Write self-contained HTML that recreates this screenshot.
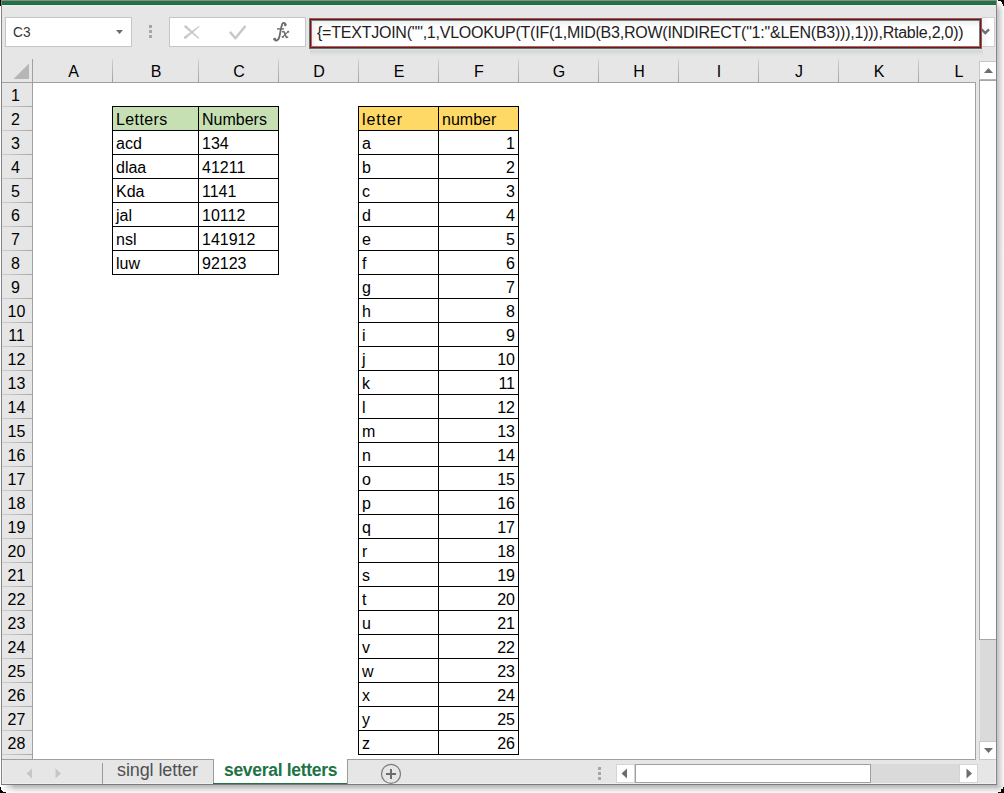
<!DOCTYPE html><html><head><meta charset="utf-8"><style>
html,body{margin:0;padding:0;}
body{width:1004px;height:793px;position:relative;overflow:hidden;background:#fff;font-family:"Liberation Sans",sans-serif;}
div{box-sizing:border-box;}
.t{position:absolute;white-space:nowrap;line-height:1;}
.c{font-size:16px;color:#000;}
.h{font-size:16px;color:#000;}
</style></head><body>
<div style="position:absolute;left:997px;top:3px;width:7px;height:782px;background:linear-gradient(to right,#c2c2c2,#cfcfcf 25%,#e2e2e2 55%,#f8f8f8);"></div>
<div style="position:absolute;left:997px;top:0px;width:7px;height:11px;background:linear-gradient(#fff,rgba(255,255,255,0));"></div>
<div style="position:absolute;left:2px;top:785px;width:995px;height:8px;background:linear-gradient(#b9b9b9,#c6c6c6 25%,#e0e0e0 55%,#fafafa);"></div>
<div style="position:absolute;left:2px;top:785px;width:13px;height:8px;background:linear-gradient(to right,#fff,rgba(255,255,255,0));"></div>
<div style="position:absolute;left:997px;top:785px;width:7px;height:8px;background:radial-gradient(circle at 0 0,#c0c0c0 0,#d4d4d4 3px,#ececec 6px,#fdfdfd 9px);"></div>
<div style="position:absolute;left:998px;top:0px;width:6px;height:1px;background:#000;"></div>
<div style="position:absolute;left:1001px;top:1px;width:3px;height:1px;background:#000;"></div>
<div style="position:absolute;left:1002px;top:2px;width:2px;height:1px;background:#000;"></div>
<div style="position:absolute;left:1002px;top:3px;width:2px;height:1px;background:#000;"></div>
<div style="position:absolute;left:1003px;top:4px;width:1px;height:1px;background:#000;"></div>
<div style="position:absolute;left:1003px;top:5px;width:1px;height:1px;background:#000;"></div>
<div style="position:absolute;left:1003px;top:787px;width:1px;height:1px;background:#000;"></div>
<div style="position:absolute;left:1003px;top:788px;width:1px;height:1px;background:#000;"></div>
<div style="position:absolute;left:1001px;top:789px;width:3px;height:1px;background:#000;"></div>
<div style="position:absolute;left:1001px;top:790px;width:3px;height:1px;background:#000;"></div>
<div style="position:absolute;left:1001px;top:791px;width:3px;height:1px;background:#000;"></div>
<div style="position:absolute;left:998px;top:792px;width:6px;height:1px;background:#000;"></div>
<div style="position:absolute;left:0px;top:787px;width:1px;height:1px;background:#000;"></div>
<div style="position:absolute;left:0px;top:788px;width:1px;height:1px;background:#000;"></div>
<div style="position:absolute;left:0px;top:789px;width:1px;height:1px;background:#000;"></div>
<div style="position:absolute;left:0px;top:790px;width:2px;height:1px;background:#000;"></div>
<div style="position:absolute;left:0px;top:791px;width:3px;height:1px;background:#000;"></div>
<div style="position:absolute;left:0px;top:792px;width:6px;height:1px;background:#000;"></div>
<div style="position:absolute;left:0px;top:0px;width:1px;height:6px;background:#000;"></div>
<div style="position:absolute;left:1px;top:0px;width:996px;height:785px;background:#e6e6e6;"></div>
<div style="position:absolute;left:2px;top:760px;width:1px;height:24px;background:#efefef;"></div>
<div style="position:absolute;left:2px;top:783px;width:994px;height:1px;background:#efefef;"></div>
<div style="position:absolute;left:995px;top:760px;width:1px;height:24px;background:#efefef;"></div>
<div style="position:absolute;left:1px;top:0px;width:996px;height:1px;background:#8e878b;"></div>
<div style="position:absolute;left:1px;top:1px;width:1px;height:784px;background:#858585;"></div>
<div style="position:absolute;left:996px;top:1px;width:1px;height:784px;background:#858585;"></div>
<div style="position:absolute;left:1px;top:784px;width:996px;height:1px;background:#7c7c7c;"></div>
<div style="position:absolute;left:2px;top:1px;width:994px;height:3px;background:#217346;"></div>
<div style="position:absolute;left:2px;top:4px;width:994px;height:1px;background:#1b6b3d;"></div>
<div style="position:absolute;left:2px;top:5px;width:994px;height:1px;background:#f2ecef;"></div>
<div style="position:absolute;left:5px;top:17px;width:127px;height:30px;background:#fff;border:1px solid #c6c6c6;"></div>
<div class="t" style="left:13px;top:24px;font-size:15.5px;color:#333;letter-spacing:0.2px;transform:scaleX(0.88);transform-origin:0 0;">C3</div>
<svg style="position:absolute;left:116px;top:30px" width="8" height="5"><path d="M0 0H7L3.5 4Z" fill="#6d6d6d"/></svg>
<div style="position:absolute;left:149px;top:25px;width:3px;height:3px;background:#a6a6a6;"></div>
<div style="position:absolute;left:149px;top:30px;width:3px;height:3px;background:#a6a6a6;"></div>
<div style="position:absolute;left:149px;top:35px;width:3px;height:3px;background:#a6a6a6;"></div>
<div style="position:absolute;left:169px;top:17px;width:137px;height:30px;background:#fff;border:1px solid #c6c6c6;"></div>
<svg style="position:absolute;left:178px;top:18px" width="30" height="28"><g fill="#c8c8c8"><polygon points="6.73,9.57 20.07,20.59 20.93,19.61 8.47,7.63"/><circle cx="7.6" cy="8.6" r="1.3"/><circle cx="20.5" cy="20.1" r="0.65"/><polygon points="8.02,20.61 21.18,9.07 20.42,8.13 6.38,18.59"/><circle cx="7.2" cy="19.6" r="1.3"/><circle cx="20.8" cy="8.6" r="0.6"/></g></svg>
<svg style="position:absolute;left:224px;top:18px" width="30" height="28"><path d="M6.6 14.6L11.4 20.2L20.8 8.8" stroke="#c8c8c8" stroke-width="2.5" stroke-linecap="round" stroke-linejoin="round" fill="none"/></svg>
<svg style="position:absolute;left:268px;top:18px" width="28" height="28"><g stroke="#6b6b6b" fill="none" stroke-linecap="round"><path d="M17.4 6.2C16.9 4.7 15.4 4.3 14.5 5.6C13.4 7.3 12.5 13.5 11.5 18.2C10.9 21 9.6 22.7 7.4 22.6" stroke-width="1.8"/><path d="M14.7 13.7C15.7 13.3 16.4 14 16.9 15.6L17.7 18.1C18.1 19.3 18.8 19.6 19.6 19.1" stroke-width="1.6"/><path d="M14.6 19.1L20.1 13.6" stroke-width="1.1"/></g><g fill="#6b6b6b"><circle cx="17.3" cy="6.9" r="1.3"/><circle cx="6.7" cy="21.2" r="1.4"/><rect x="9" y="10.2" width="7" height="1.4"/><circle cx="20.2" cy="13.7" r="1.05"/><circle cx="14.6" cy="19.1" r="1.0"/></g></svg>
<div style="position:absolute;left:310px;top:49px;width:673px;height:7px;background:linear-gradient(#e4e4e4 0,#e4e4e4 14%,#d6d6d6 14%,#d8d8d8 35%,#e0e0e0 70%,#e6e6e6);"></div>
<div style="position:absolute;left:309px;top:18px;width:673px;height:31px;background:#fff;border:1px solid #627272;"></div>
<div style="position:absolute;left:310px;top:19px;width:671px;height:29px;border:1px solid #a80000;"></div>
<div style="position:absolute;left:311px;top:20px;width:669px;height:27px;border:1px solid #6f8080;"></div>
<div style="position:absolute;left:312px;top:21px;width:667px;height:25px;background:#fff;box-shadow:inset 3px 3px 5px rgba(0,0,0,0.07);"></div>
<div class="t" style="left:317px;top:25px;font-size:16px;color:#222;letter-spacing:-0.235px;">{=TEXTJOIN("",1,VLOOKUP(T(IF(1,MID(B3,ROW(INDIRECT("1:"&amp;LEN(B3))),1))),Rtable,2,0))</div>
<div style="position:absolute;left:982px;top:17px;width:13px;height:30px;background:linear-gradient(to right,#f2f2f2,#fff 60%);border:1px solid #cfcfcf;border-left:none;"></div>
<svg style="position:absolute;left:979px;top:27px" width="12" height="9"><path d="M2.6 2.4L6.3 6.1L10 2.4" stroke="#6d6d6d" stroke-width="2.4" fill="none"/></svg>
<div style="position:absolute;left:112px;top:59px;width:1px;height:23px;background:linear-gradient(#d2d2d2,#b8b8b8 50%,#a2a2a2);"></div>
<div class="t h" style="left:34px;top:64px;width:79px;text-align:center;">A</div>
<div style="position:absolute;left:198px;top:59px;width:1px;height:23px;background:linear-gradient(#d2d2d2,#b8b8b8 50%,#a2a2a2);"></div>
<div class="t h" style="left:113px;top:64px;width:86px;text-align:center;">B</div>
<div style="position:absolute;left:278px;top:59px;width:1px;height:23px;background:linear-gradient(#d2d2d2,#b8b8b8 50%,#a2a2a2);"></div>
<div class="t h" style="left:199px;top:64px;width:80px;text-align:center;">C</div>
<div style="position:absolute;left:358px;top:59px;width:1px;height:23px;background:linear-gradient(#d2d2d2,#b8b8b8 50%,#a2a2a2);"></div>
<div class="t h" style="left:279px;top:64px;width:80px;text-align:center;">D</div>
<div style="position:absolute;left:438px;top:59px;width:1px;height:23px;background:linear-gradient(#d2d2d2,#b8b8b8 50%,#a2a2a2);"></div>
<div class="t h" style="left:359px;top:64px;width:80px;text-align:center;">E</div>
<div style="position:absolute;left:518px;top:59px;width:1px;height:23px;background:linear-gradient(#d2d2d2,#b8b8b8 50%,#a2a2a2);"></div>
<div class="t h" style="left:439px;top:64px;width:80px;text-align:center;">F</div>
<div style="position:absolute;left:598px;top:59px;width:1px;height:23px;background:linear-gradient(#d2d2d2,#b8b8b8 50%,#a2a2a2);"></div>
<div class="t h" style="left:519px;top:64px;width:80px;text-align:center;">G</div>
<div style="position:absolute;left:678px;top:59px;width:1px;height:23px;background:linear-gradient(#d2d2d2,#b8b8b8 50%,#a2a2a2);"></div>
<div class="t h" style="left:599px;top:64px;width:80px;text-align:center;">H</div>
<div style="position:absolute;left:758px;top:59px;width:1px;height:23px;background:linear-gradient(#d2d2d2,#b8b8b8 50%,#a2a2a2);"></div>
<div class="t h" style="left:679px;top:64px;width:80px;text-align:center;">I</div>
<div style="position:absolute;left:838px;top:59px;width:1px;height:23px;background:linear-gradient(#d2d2d2,#b8b8b8 50%,#a2a2a2);"></div>
<div class="t h" style="left:759px;top:64px;width:80px;text-align:center;">J</div>
<div style="position:absolute;left:918px;top:59px;width:1px;height:23px;background:linear-gradient(#d2d2d2,#b8b8b8 50%,#a2a2a2);"></div>
<div class="t h" style="left:839px;top:64px;width:80px;text-align:center;">K</div>
<div class="t h" style="left:919px;top:64px;width:80px;text-align:center;">L</div>
<div style="position:absolute;left:2px;top:82px;width:974px;height:1px;background:#a0a0a0;"></div>
<svg style="position:absolute;left:13px;top:63px" width="17" height="17"><path d="M16 0.5V16H0.5Z" fill="#b6b6b6"/></svg>
<div style="position:absolute;left:32px;top:59px;width:1px;height:701px;background:#a0a0a0;"></div>
<div style="position:absolute;left:2px;top:106px;width:30px;height:1px;background:linear-gradient(to right,#d0d0d0,#bcbcbc 50%,#a6a6a6);"></div>
<div class="t h" style="left:0.5px;top:88px;width:30px;text-align:center;">1</div>
<div style="position:absolute;left:2px;top:130px;width:30px;height:1px;background:linear-gradient(to right,#d0d0d0,#bcbcbc 50%,#a6a6a6);"></div>
<div class="t h" style="left:0.5px;top:112px;width:30px;text-align:center;">2</div>
<div style="position:absolute;left:2px;top:154px;width:30px;height:1px;background:linear-gradient(to right,#d0d0d0,#bcbcbc 50%,#a6a6a6);"></div>
<div class="t h" style="left:0.5px;top:136px;width:30px;text-align:center;">3</div>
<div style="position:absolute;left:2px;top:178px;width:30px;height:1px;background:linear-gradient(to right,#d0d0d0,#bcbcbc 50%,#a6a6a6);"></div>
<div class="t h" style="left:0.5px;top:160px;width:30px;text-align:center;">4</div>
<div style="position:absolute;left:2px;top:202px;width:30px;height:1px;background:linear-gradient(to right,#d0d0d0,#bcbcbc 50%,#a6a6a6);"></div>
<div class="t h" style="left:0.5px;top:184px;width:30px;text-align:center;">5</div>
<div style="position:absolute;left:2px;top:226px;width:30px;height:1px;background:linear-gradient(to right,#d0d0d0,#bcbcbc 50%,#a6a6a6);"></div>
<div class="t h" style="left:0.5px;top:208px;width:30px;text-align:center;">6</div>
<div style="position:absolute;left:2px;top:250px;width:30px;height:1px;background:linear-gradient(to right,#d0d0d0,#bcbcbc 50%,#a6a6a6);"></div>
<div class="t h" style="left:0.5px;top:232px;width:30px;text-align:center;">7</div>
<div style="position:absolute;left:2px;top:274px;width:30px;height:1px;background:linear-gradient(to right,#d0d0d0,#bcbcbc 50%,#a6a6a6);"></div>
<div class="t h" style="left:0.5px;top:256px;width:30px;text-align:center;">8</div>
<div style="position:absolute;left:2px;top:298px;width:30px;height:1px;background:linear-gradient(to right,#d0d0d0,#bcbcbc 50%,#a6a6a6);"></div>
<div class="t h" style="left:0.5px;top:280px;width:30px;text-align:center;">9</div>
<div style="position:absolute;left:2px;top:322px;width:30px;height:1px;background:linear-gradient(to right,#d0d0d0,#bcbcbc 50%,#a6a6a6);"></div>
<div class="t h" style="left:1.5px;top:304px;width:30px;text-align:center;">10</div>
<div style="position:absolute;left:2px;top:346px;width:30px;height:1px;background:linear-gradient(to right,#d0d0d0,#bcbcbc 50%,#a6a6a6);"></div>
<div class="t h" style="left:1.5px;top:328px;width:30px;text-align:center;">11</div>
<div style="position:absolute;left:2px;top:370px;width:30px;height:1px;background:linear-gradient(to right,#d0d0d0,#bcbcbc 50%,#a6a6a6);"></div>
<div class="t h" style="left:1.5px;top:352px;width:30px;text-align:center;">12</div>
<div style="position:absolute;left:2px;top:394px;width:30px;height:1px;background:linear-gradient(to right,#d0d0d0,#bcbcbc 50%,#a6a6a6);"></div>
<div class="t h" style="left:1.5px;top:376px;width:30px;text-align:center;">13</div>
<div style="position:absolute;left:2px;top:418px;width:30px;height:1px;background:linear-gradient(to right,#d0d0d0,#bcbcbc 50%,#a6a6a6);"></div>
<div class="t h" style="left:1.5px;top:400px;width:30px;text-align:center;">14</div>
<div style="position:absolute;left:2px;top:442px;width:30px;height:1px;background:linear-gradient(to right,#d0d0d0,#bcbcbc 50%,#a6a6a6);"></div>
<div class="t h" style="left:1.5px;top:424px;width:30px;text-align:center;">15</div>
<div style="position:absolute;left:2px;top:466px;width:30px;height:1px;background:linear-gradient(to right,#d0d0d0,#bcbcbc 50%,#a6a6a6);"></div>
<div class="t h" style="left:1.5px;top:448px;width:30px;text-align:center;">16</div>
<div style="position:absolute;left:2px;top:490px;width:30px;height:1px;background:linear-gradient(to right,#d0d0d0,#bcbcbc 50%,#a6a6a6);"></div>
<div class="t h" style="left:1.5px;top:472px;width:30px;text-align:center;">17</div>
<div style="position:absolute;left:2px;top:514px;width:30px;height:1px;background:linear-gradient(to right,#d0d0d0,#bcbcbc 50%,#a6a6a6);"></div>
<div class="t h" style="left:1.5px;top:496px;width:30px;text-align:center;">18</div>
<div style="position:absolute;left:2px;top:538px;width:30px;height:1px;background:linear-gradient(to right,#d0d0d0,#bcbcbc 50%,#a6a6a6);"></div>
<div class="t h" style="left:1.5px;top:520px;width:30px;text-align:center;">19</div>
<div style="position:absolute;left:2px;top:562px;width:30px;height:1px;background:linear-gradient(to right,#d0d0d0,#bcbcbc 50%,#a6a6a6);"></div>
<div class="t h" style="left:1.5px;top:544px;width:30px;text-align:center;">20</div>
<div style="position:absolute;left:2px;top:586px;width:30px;height:1px;background:linear-gradient(to right,#d0d0d0,#bcbcbc 50%,#a6a6a6);"></div>
<div class="t h" style="left:1.5px;top:568px;width:30px;text-align:center;">21</div>
<div style="position:absolute;left:2px;top:610px;width:30px;height:1px;background:linear-gradient(to right,#d0d0d0,#bcbcbc 50%,#a6a6a6);"></div>
<div class="t h" style="left:1.5px;top:592px;width:30px;text-align:center;">22</div>
<div style="position:absolute;left:2px;top:634px;width:30px;height:1px;background:linear-gradient(to right,#d0d0d0,#bcbcbc 50%,#a6a6a6);"></div>
<div class="t h" style="left:1.5px;top:616px;width:30px;text-align:center;">23</div>
<div style="position:absolute;left:2px;top:658px;width:30px;height:1px;background:linear-gradient(to right,#d0d0d0,#bcbcbc 50%,#a6a6a6);"></div>
<div class="t h" style="left:1.5px;top:640px;width:30px;text-align:center;">24</div>
<div style="position:absolute;left:2px;top:682px;width:30px;height:1px;background:linear-gradient(to right,#d0d0d0,#bcbcbc 50%,#a6a6a6);"></div>
<div class="t h" style="left:1.5px;top:664px;width:30px;text-align:center;">25</div>
<div style="position:absolute;left:2px;top:706px;width:30px;height:1px;background:linear-gradient(to right,#d0d0d0,#bcbcbc 50%,#a6a6a6);"></div>
<div class="t h" style="left:1.5px;top:688px;width:30px;text-align:center;">26</div>
<div style="position:absolute;left:2px;top:730px;width:30px;height:1px;background:linear-gradient(to right,#d0d0d0,#bcbcbc 50%,#a6a6a6);"></div>
<div class="t h" style="left:1.5px;top:712px;width:30px;text-align:center;">27</div>
<div style="position:absolute;left:2px;top:754px;width:30px;height:1px;background:linear-gradient(to right,#d0d0d0,#bcbcbc 50%,#a6a6a6);"></div>
<div class="t h" style="left:1.5px;top:736px;width:30px;text-align:center;">28</div>
<div style="position:absolute;left:33px;top:83px;width:942px;height:676px;background:#fff;"></div>
<div style="position:absolute;left:975px;top:83px;width:1px;height:677px;background:#a0a0a0;"></div>
<div style="position:absolute;left:2px;top:759px;width:974px;height:1px;background:#a0a0a0;"></div>
<div style="position:absolute;left:112px;top:106px;width:87px;height:25px;background:#c6e0b4;"></div>
<div style="position:absolute;left:198px;top:106px;width:81px;height:25px;background:#c6e0b4;"></div>
<div class="t" style="left:116px;top:112px;font-size:16px;letter-spacing:0.4px;">Letters</div>
<div class="t" style="left:202px;top:112px;font-size:16px;">Numbers</div>
<div class="t" style="left:116px;top:136px;font-size:16px;">acd</div>
<div class="t" style="left:202px;top:136px;font-size:16px;">134</div>
<div class="t" style="left:116px;top:160px;font-size:16px;">dlaa</div>
<div class="t" style="left:202px;top:160px;font-size:16px;">41211</div>
<div class="t" style="left:116px;top:184px;font-size:16px;">Kda</div>
<div class="t" style="left:202px;top:184px;font-size:16px;">1141</div>
<div class="t" style="left:116px;top:208px;font-size:16px;">jal</div>
<div class="t" style="left:202px;top:208px;font-size:16px;">10112</div>
<div class="t" style="left:116px;top:232px;font-size:16px;">nsl</div>
<div class="t" style="left:202px;top:232px;font-size:16px;">141912</div>
<div class="t" style="left:116px;top:256px;font-size:16px;">luw</div>
<div class="t" style="left:202px;top:256px;font-size:16px;">92123</div>
<div style="position:absolute;left:112px;top:106px;width:167px;height:1px;background:#000;"></div>
<div style="position:absolute;left:112px;top:130px;width:167px;height:1px;background:#000;"></div>
<div style="position:absolute;left:112px;top:154px;width:167px;height:1px;background:#000;"></div>
<div style="position:absolute;left:112px;top:178px;width:167px;height:1px;background:#000;"></div>
<div style="position:absolute;left:112px;top:202px;width:167px;height:1px;background:#000;"></div>
<div style="position:absolute;left:112px;top:226px;width:167px;height:1px;background:#000;"></div>
<div style="position:absolute;left:112px;top:250px;width:167px;height:1px;background:#000;"></div>
<div style="position:absolute;left:112px;top:274px;width:167px;height:1px;background:#000;"></div>
<div style="position:absolute;left:112px;top:106px;width:1px;height:169px;background:#000;"></div>
<div style="position:absolute;left:198px;top:106px;width:1px;height:169px;background:#000;"></div>
<div style="position:absolute;left:278px;top:106px;width:1px;height:169px;background:#000;"></div>
<div style="position:absolute;left:358px;top:106px;width:161px;height:25px;background:#ffd966;"></div>
<div class="t" style="left:362px;top:112px;font-size:16px;letter-spacing:0.9px;">letter</div>
<div class="t" style="left:442px;top:112px;font-size:16px;">number</div>
<div class="t" style="left:362px;top:136px;font-size:16px;">a</div>
<div class="t" style="left:438px;top:136px;width:77px;text-align:right;font-size:16px;">1</div>
<div class="t" style="left:362px;top:160px;font-size:16px;">b</div>
<div class="t" style="left:438px;top:160px;width:77px;text-align:right;font-size:16px;">2</div>
<div class="t" style="left:362px;top:184px;font-size:16px;">c</div>
<div class="t" style="left:438px;top:184px;width:77px;text-align:right;font-size:16px;">3</div>
<div class="t" style="left:362px;top:208px;font-size:16px;">d</div>
<div class="t" style="left:438px;top:208px;width:77px;text-align:right;font-size:16px;">4</div>
<div class="t" style="left:362px;top:232px;font-size:16px;">e</div>
<div class="t" style="left:438px;top:232px;width:77px;text-align:right;font-size:16px;">5</div>
<div class="t" style="left:362px;top:256px;font-size:16px;">f</div>
<div class="t" style="left:438px;top:256px;width:77px;text-align:right;font-size:16px;">6</div>
<div class="t" style="left:362px;top:280px;font-size:16px;">g</div>
<div class="t" style="left:438px;top:280px;width:77px;text-align:right;font-size:16px;">7</div>
<div class="t" style="left:362px;top:304px;font-size:16px;">h</div>
<div class="t" style="left:438px;top:304px;width:77px;text-align:right;font-size:16px;">8</div>
<div class="t" style="left:362px;top:328px;font-size:16px;">i</div>
<div class="t" style="left:438px;top:328px;width:77px;text-align:right;font-size:16px;">9</div>
<div class="t" style="left:362px;top:352px;font-size:16px;">j</div>
<div class="t" style="left:438px;top:352px;width:77px;text-align:right;font-size:16px;">10</div>
<div class="t" style="left:362px;top:376px;font-size:16px;">k</div>
<div class="t" style="left:438px;top:376px;width:77px;text-align:right;font-size:16px;">11</div>
<div class="t" style="left:362px;top:400px;font-size:16px;">l</div>
<div class="t" style="left:438px;top:400px;width:77px;text-align:right;font-size:16px;">12</div>
<div class="t" style="left:362px;top:424px;font-size:16px;">m</div>
<div class="t" style="left:438px;top:424px;width:77px;text-align:right;font-size:16px;">13</div>
<div class="t" style="left:362px;top:448px;font-size:16px;">n</div>
<div class="t" style="left:438px;top:448px;width:77px;text-align:right;font-size:16px;">14</div>
<div class="t" style="left:362px;top:472px;font-size:16px;">o</div>
<div class="t" style="left:438px;top:472px;width:77px;text-align:right;font-size:16px;">15</div>
<div class="t" style="left:362px;top:496px;font-size:16px;">p</div>
<div class="t" style="left:438px;top:496px;width:77px;text-align:right;font-size:16px;">16</div>
<div class="t" style="left:362px;top:520px;font-size:16px;">q</div>
<div class="t" style="left:438px;top:520px;width:77px;text-align:right;font-size:16px;">17</div>
<div class="t" style="left:362px;top:544px;font-size:16px;">r</div>
<div class="t" style="left:438px;top:544px;width:77px;text-align:right;font-size:16px;">18</div>
<div class="t" style="left:362px;top:568px;font-size:16px;">s</div>
<div class="t" style="left:438px;top:568px;width:77px;text-align:right;font-size:16px;">19</div>
<div class="t" style="left:362px;top:592px;font-size:16px;">t</div>
<div class="t" style="left:438px;top:592px;width:77px;text-align:right;font-size:16px;">20</div>
<div class="t" style="left:362px;top:616px;font-size:16px;">u</div>
<div class="t" style="left:438px;top:616px;width:77px;text-align:right;font-size:16px;">21</div>
<div class="t" style="left:362px;top:640px;font-size:16px;">v</div>
<div class="t" style="left:438px;top:640px;width:77px;text-align:right;font-size:16px;">22</div>
<div class="t" style="left:362px;top:664px;font-size:16px;">w</div>
<div class="t" style="left:438px;top:664px;width:77px;text-align:right;font-size:16px;">23</div>
<div class="t" style="left:362px;top:688px;font-size:16px;">x</div>
<div class="t" style="left:438px;top:688px;width:77px;text-align:right;font-size:16px;">24</div>
<div class="t" style="left:362px;top:712px;font-size:16px;">y</div>
<div class="t" style="left:438px;top:712px;width:77px;text-align:right;font-size:16px;">25</div>
<div class="t" style="left:362px;top:736px;font-size:16px;">z</div>
<div class="t" style="left:438px;top:736px;width:77px;text-align:right;font-size:16px;">26</div>
<div style="position:absolute;left:358px;top:106px;width:161px;height:1px;background:#000;"></div>
<div style="position:absolute;left:358px;top:130px;width:161px;height:1px;background:#000;"></div>
<div style="position:absolute;left:358px;top:154px;width:161px;height:1px;background:#000;"></div>
<div style="position:absolute;left:358px;top:178px;width:161px;height:1px;background:#000;"></div>
<div style="position:absolute;left:358px;top:202px;width:161px;height:1px;background:#000;"></div>
<div style="position:absolute;left:358px;top:226px;width:161px;height:1px;background:#000;"></div>
<div style="position:absolute;left:358px;top:250px;width:161px;height:1px;background:#000;"></div>
<div style="position:absolute;left:358px;top:274px;width:161px;height:1px;background:#000;"></div>
<div style="position:absolute;left:358px;top:298px;width:161px;height:1px;background:#000;"></div>
<div style="position:absolute;left:358px;top:322px;width:161px;height:1px;background:#000;"></div>
<div style="position:absolute;left:358px;top:346px;width:161px;height:1px;background:#000;"></div>
<div style="position:absolute;left:358px;top:370px;width:161px;height:1px;background:#000;"></div>
<div style="position:absolute;left:358px;top:394px;width:161px;height:1px;background:#000;"></div>
<div style="position:absolute;left:358px;top:418px;width:161px;height:1px;background:#000;"></div>
<div style="position:absolute;left:358px;top:442px;width:161px;height:1px;background:#000;"></div>
<div style="position:absolute;left:358px;top:466px;width:161px;height:1px;background:#000;"></div>
<div style="position:absolute;left:358px;top:490px;width:161px;height:1px;background:#000;"></div>
<div style="position:absolute;left:358px;top:514px;width:161px;height:1px;background:#000;"></div>
<div style="position:absolute;left:358px;top:538px;width:161px;height:1px;background:#000;"></div>
<div style="position:absolute;left:358px;top:562px;width:161px;height:1px;background:#000;"></div>
<div style="position:absolute;left:358px;top:586px;width:161px;height:1px;background:#000;"></div>
<div style="position:absolute;left:358px;top:610px;width:161px;height:1px;background:#000;"></div>
<div style="position:absolute;left:358px;top:634px;width:161px;height:1px;background:#000;"></div>
<div style="position:absolute;left:358px;top:658px;width:161px;height:1px;background:#000;"></div>
<div style="position:absolute;left:358px;top:682px;width:161px;height:1px;background:#000;"></div>
<div style="position:absolute;left:358px;top:706px;width:161px;height:1px;background:#000;"></div>
<div style="position:absolute;left:358px;top:730px;width:161px;height:1px;background:#000;"></div>
<div style="position:absolute;left:358px;top:754px;width:161px;height:1px;background:#000;"></div>
<div style="position:absolute;left:358px;top:106px;width:1px;height:649px;background:#000;"></div>
<div style="position:absolute;left:438px;top:106px;width:1px;height:649px;background:#000;"></div>
<div style="position:absolute;left:518px;top:106px;width:1px;height:649px;background:#000;"></div>
<div style="position:absolute;left:979px;top:61px;width:17px;height:19px;background:#fff;border:1px solid #c8c8c8;border-right:none;border-bottom-color:#b4b4b4;"></div>
<svg style="position:absolute;left:984px;top:68px" width="10" height="6"><path d="M0 5H9L4.5 0Z" fill="#6d6d6d"/></svg>
<div style="position:absolute;left:979px;top:80px;width:17px;height:560px;background:#fff;border:1px solid #a6a6a6;border-right:none;"></div>
<div style="position:absolute;left:980px;top:640px;width:16px;height:101px;background:#dadada;"></div>
<div style="position:absolute;left:979px;top:741px;width:17px;height:19px;background:#fff;border:1px solid #c8c8c8;border-right:none;"></div>
<svg style="position:absolute;left:984px;top:748px" width="10" height="6"><path d="M0 0H9L4.5 5Z" fill="#6d6d6d"/></svg>
<div style="position:absolute;left:102px;top:763px;width:1px;height:21px;background:#9a9a9a;"></div>
<svg style="position:absolute;left:26px;top:768px" width="7" height="11"><path d="M6 0.5V10.5L0.5 5.5Z" fill="#c6c6c6"/></svg>
<svg style="position:absolute;left:55px;top:768px" width="7" height="11"><path d="M0.5 0.5V10.5L6 5.5Z" fill="#c6c6c6"/></svg>
<div class="t" style="left:117px;top:761px;font-size:18px;color:#505050;letter-spacing:-0.1px;">singl letter</div>
<div style="position:absolute;left:213px;top:759px;width:1px;height:25px;background:#9a9a9a;"></div>
<div style="position:absolute;left:214px;top:759px;width:133px;height:25px;background:#fff;"></div>
<div style="position:absolute;left:213px;top:783px;width:135px;height:1px;background:#217346;"></div>
<div style="position:absolute;left:347px;top:759px;width:1px;height:25px;background:#9a9a9a;"></div>
<div class="t" style="left:224px;top:761.5px;font-size:17.5px;font-weight:bold;color:#217346;letter-spacing:-0.3px;">several letters</div>
<svg style="position:absolute;left:380px;top:763px" width="22" height="22"><circle cx="11" cy="10.9" r="9.5" stroke="#7a7a7a" stroke-width="1.2" fill="none"/><path d="M11 6V16M6 11H16" stroke="#6d6d6d" stroke-width="2"/></svg>
<div style="position:absolute;left:598px;top:767px;width:3px;height:3px;background:#a6a6a6;"></div>
<div style="position:absolute;left:598px;top:772px;width:3px;height:3px;background:#a6a6a6;"></div>
<div style="position:absolute;left:598px;top:777px;width:3px;height:3px;background:#a6a6a6;"></div>
<div style="position:absolute;left:616px;top:764px;width:19px;height:19px;background:#fff;border:1px solid #d4d4d4;"></div>
<svg style="position:absolute;left:621px;top:768px" width="7" height="11"><path d="M6 0.5V10.5L0.5 5.5Z" fill="#6d6d6d"/></svg>
<div style="position:absolute;left:635px;top:764px;width:236px;height:19px;background:#fff;border:1px solid #a0a0a0;"></div>
<div style="position:absolute;left:871px;top:764px;width:88px;height:19px;background:#dadada;"></div>
<div style="position:absolute;left:959px;top:764px;width:19px;height:19px;background:#fff;border:1px solid #d4d4d4;"></div>
<svg style="position:absolute;left:966px;top:768px" width="7" height="11"><path d="M0.5 0.5V10.5L6 5.5Z" fill="#6d6d6d"/></svg>
</body></html>
